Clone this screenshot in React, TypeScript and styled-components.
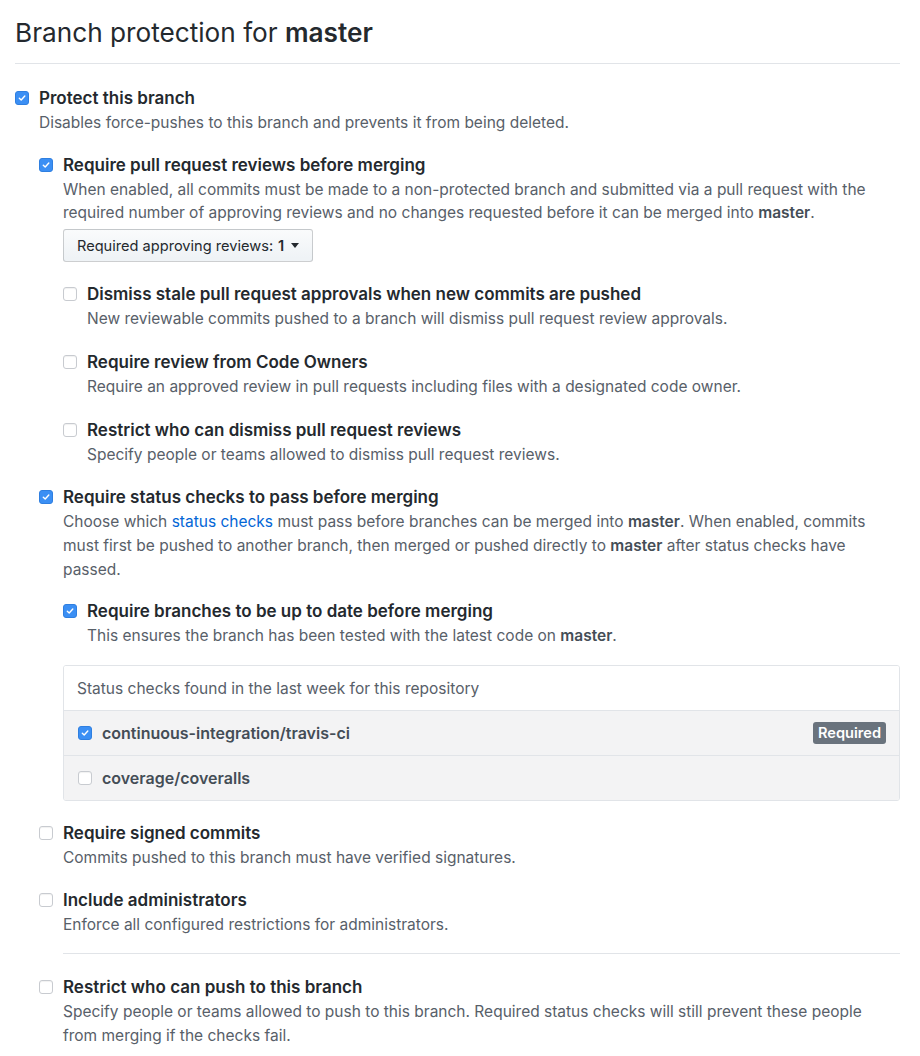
import React, { PropsWithChildren, ReactNode } from 'react';
import styled, { createGlobalStyle } from 'styled-components';

const GlobalStyle = createGlobalStyle`
  html, body {
    margin: 0;
    background: #fff;
  }
  body {
    font-family: Inter, "Liberation Sans", Arial, sans-serif;
    color: #24292e;
    -webkit-font-smoothing: antialiased;
  }
`;

const Page = styled.div`
  width: 885px;
  padding: 15px 0 0 15px;
`;

const Title = styled.h2`
  margin: 0;
  padding-bottom: 12px;
  font-size: 26.2px;
  line-height: 36px;
  font-weight: 400;
  color: #24292e;
  border-bottom: 1px solid #e1e4e8;

  b {
    font-weight: 600;
  }
`;

const Section = styled.div`
  padding-top: 4px;
`;

const Item = styled.div<{ $indent?: boolean; $gap?: number }>`
  margin-top: ${(p) => p.$gap ?? 19}px;
  margin-left: ${(p) => (p.$indent ? 24 : 0)}px;
`;

const LabelRow = styled.label`
  display: flex;
  align-items: center;
  gap: 10px;
  font-size: 17px;
  line-height: 24px;
  font-weight: 600;
  color: #24292e;
`;

const Note = styled.p`
  margin: 1px 0 0 24px;
  font-size: 15.5px;
  line-height: 23.7px;
  color: #586069;

  b {
    font-weight: 600;
    color: #444d56;
  }

  a {
    color: #0366d6;
    text-decoration: none;
  }
`;

const Box = styled.span<{ $checked?: boolean }>`
  flex: none;
  width: 14px;
  height: 14px;
  box-sizing: border-box;
  border-radius: 3px;
  display: inline-flex;
  align-items: center;
  justify-content: center;
  background: ${(p) => (p.$checked ? '#3b8ff4' : '#fff')};
  border: 1px solid ${(p) => (p.$checked ? '#2f7fe0' : '#c8cbd0')};
  box-shadow: ${(p) => (p.$checked ? 'none' : 'inset 0 1px 1px rgba(0,0,0,0.06)')};
`;

const Check = ({ checked }: { checked?: boolean }) => (
  <Box $checked={checked}>
    {checked && (
      <svg width="10" height="10" viewBox="0 0 10 10">
        <path d="M2.3 5.2 L4.2 7 L7.8 3" fill="none" stroke="#fff" strokeWidth="1.4" strokeLinecap="round" strokeLinejoin="round" />
      </svg>
    )}
  </Box>
);

const Option = ({
  title,
  checked,
  note,
  indent,
  gap,
  children,
}: PropsWithChildren<{ title: string; checked?: boolean; note: ReactNode; indent?: boolean; gap?: number }>) => (
  <Item $indent={indent} $gap={gap}>
    <LabelRow>
      <Check checked={checked} />
      {title}
    </LabelRow>
    <Note>{note}</Note>
    {children}
  </Item>
);

const Dropdown = styled.button`
  margin: 4px 0 0 24px;
  height: 33px;
  padding: 0 13px;
  display: inline-flex;
  align-items: center;
  gap: 5px;
  font-family: inherit;
  font-size: 14.6px;
  color: #24292e;
  background: linear-gradient(#fafbfc, #eff3f6 90%);
  border: 1px solid rgba(27, 31, 35, 0.2);
  border-radius: 3px;

  b {
    font-weight: 600;
  }
`;

const Caret = styled.span`
  width: 0;
  height: 0;
  margin-left: 2px;
  border-left: 4px solid transparent;
  border-right: 4px solid transparent;
  border-top: 5px solid #24292e;
`;

const ChecksPanel = styled.div`
  margin: 17px 0 0 24px;
  border: 1px solid #e1e4e8;
  border-radius: 3px;
  overflow: hidden;
`;

const PanelHead = styled.div`
  height: 44px;
  padding: 0 13px;
  display: flex;
  align-items: center;
  font-size: 15.5px;
  color: #586069;
  background: #fff;
`;

const PanelRow = styled.div`
  height: 44px;
  padding: 0 13px 0 14px;
  display: flex;
  align-items: center;
  gap: 10px;
  border-top: 1px solid #e1e4e8;
  background: #f3f3f4;
  font-size: 16px;
  font-weight: 600;
  color: #444d56;
`;

const RowName = styled.span`
  flex: 1;
`;

const Badge = styled.span`
  padding: 2px 5px;
  border-radius: 3px;
  background: #6a737d;
  color: #fff;
  font-size: 14.6px;
  line-height: 18px;
  font-weight: 600;
`;

const Divider = styled.hr`
  margin: 17px 0 0 48px;
  border: 0;
  border-top: 1px solid #e1e4e8;
`;

export default function App() {
  return (
    <Page>
      <GlobalStyle />
      <Title>
        Branch protection for <b>master</b>
      </Title>
      <Section>
        <Option
          title="Protect this branch"
          checked
          gap={18}
          note="Disables force-pushes to this branch and prevents it from being deleted."
        >
          <Option
            indent
            checked
            gap={18}
            title="Require pull request reviews before merging"
            note={
              <>
                When enabled, all commits must be made to a non-protected branch and submitted via a pull request with the
                required number of approving reviews and no changes requested before it can be merged into <b>master</b>.
              </>
            }
          >
            <Dropdown>
              Required approving reviews: <b>1</b>
              <Caret />
            </Dropdown>
            <Option
              indent
              gap={20}
              title="Dismiss stale pull request approvals when new commits are pushed"
              note="New reviewable commits pushed to a branch will dismiss pull request review approvals."
            />
            <Option
              indent
              title="Require review from Code Owners"
              note="Require an approved review in pull requests including files with a designated code owner."
            />
            <Option
              indent
              title="Restrict who can dismiss pull request reviews"
              note="Specify people or teams allowed to dismiss pull request reviews."
            />
          </Option>
          <Option
            indent
            checked
            title="Require status checks to pass before merging"
            note={
              <>
                Choose which <a href="#">status checks</a> must pass before branches can be merged into <b>master</b>. When
                enabled, commits must first be pushed to another branch, then merged or pushed directly to <b>master</b> after
                status checks have passed.
              </>
            }
          >
            <Option
              indent
              checked
              gap={18}
              title="Require branches to be up to date before merging"
              note={
                <>
                  This ensures the branch has been tested with the latest code on <b>master</b>.
                </>
              }
            />
            <ChecksPanel>
              <PanelHead>Status checks found in the last week for this repository</PanelHead>
              <PanelRow>
                <Check checked />
                <RowName>continuous-integration/travis-ci</RowName>
                <Badge>Required</Badge>
              </PanelRow>
              <PanelRow>
                <Check />
                <RowName>coverage/coveralls</RowName>
              </PanelRow>
            </ChecksPanel>
          </Option>
          <Option
            indent
            gap={20}
            title="Require signed commits"
            note="Commits pushed to this branch must have verified signatures."
          />
          <Option
            indent
            gap={18}
            title="Include administrators"
            note="Enforce all configured restrictions for administrators."
          />
          <Divider />
          <Option
            indent
            gap={21}
            title="Restrict who can push to this branch"
            note="Specify people or teams allowed to push to this branch. Required status checks will still prevent these people from merging if the checks fail."
          />
        </Option>
      </Section>
    </Page>
  );
}
